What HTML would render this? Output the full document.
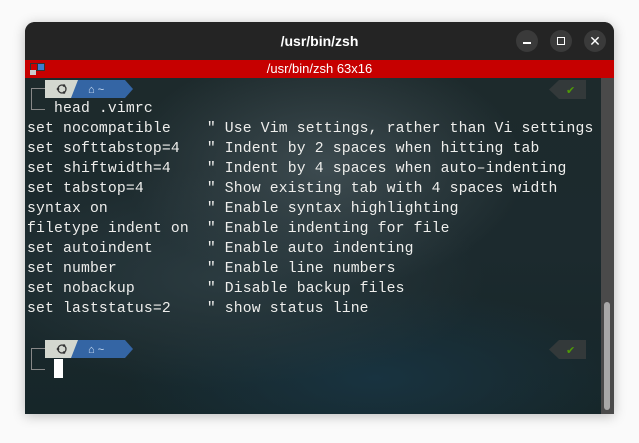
<!DOCTYPE html>
<html><head><style>
body{margin:0;width:639px;height:443px;background:#fafafa;position:relative;overflow:hidden;font-family:"Liberation Sans",sans-serif}
.win{position:absolute;left:25px;top:22px;width:589px;height:392px;border-radius:10px 10px 0 0;overflow:hidden;box-shadow:0 2px 12px rgba(0,0,0,.25);background:#242424}
.title{position:absolute;left:0;top:0;width:589px;height:38px;background:#242424;color:#fff;font-weight:bold;font-size:14px;text-align:center;line-height:38px}
.btn{position:absolute;top:8px;width:22px;height:22px;border-radius:50%;background:#3a3a3a}
.red{position:absolute;left:0;top:38px;width:589px;height:18px;background:#c60000;color:#fff;font-size:13px;text-align:center;line-height:18px}
.term{position:absolute;left:0;top:56px;width:576px;height:336px;background:
radial-gradient(ellipse 200px 120px at 300px 90px,#3d4b50,transparent),
radial-gradient(ellipse 260px 110px at 200px 200px,#2b3b40,transparent),
radial-gradient(ellipse 250px 90px at 350px 300px,#183340,transparent),
linear-gradient(#1d2a2c,#1c2a2e 50%,#162629);}
.sb{position:absolute;left:576px;top:56px;width:13px;height:336px;background:#4a4a4a}
.th{position:absolute;left:3px;top:224px;width:6px;height:108px;border-radius:3px;background:#a8a8a8}
pre{position:absolute;left:2px;top:21px;margin:0;font-family:"Liberation Mono",monospace;font-size:14.75px;letter-spacing:0.14px;line-height:20px;color:#eeeeec}
.seg{position:absolute;height:18px}
</style></head><body>
<div class="win">
<div class="title">/usr/bin/zsh</div>
<div class="btn" style="left:491px"><div style="position:absolute;left:7px;top:12px;width:8px;height:1.5px;background:#fff"></div></div>
<div class="btn" style="left:525px"><div style="position:absolute;left:7px;top:7px;width:6px;height:6px;border:1.5px solid #fff"></div></div>
<div class="btn" style="left:559px;color:#fff;font-size:14px;text-align:center;line-height:22px">✕</div>
<div class="red">/usr/bin/zsh 63x16
<div style="position:absolute;left:5px;top:3px;width:6px;height:6px;background:#c00;border:1px solid #333"></div>
<div style="position:absolute;left:12px;top:3px;width:6px;height:6px;background:#3d7cd0;border:1px solid #333"></div>
<div style="position:absolute;left:5px;top:10px;width:6px;height:5px;background:#ccc"></div>
</div>
<div class="term">
<div style="position:absolute;left:6px;top:10px;width:13px;height:20px;border:1px solid #888;border-right:none"></div>
<div class="seg" style="left:20px;top:2px;width:38px;background:#d3d7cf"></div>
<svg style="position:absolute;left:30px;top:5px" width="14" height="12"><circle cx="7" cy="6" r="4" fill="none" stroke="#333" stroke-width="1.3"/><circle cx="3" cy="6" r="1.3" fill="#333"/><circle cx="9" cy="2.5" r="1.3" fill="#333"/><circle cx="9" cy="9.5" r="1.3" fill="#333"/></svg>
<svg style="position:absolute;left:46px;top:2px" width="62" height="18"><polygon points="7,0 54,0 62,9 54,18 0,18" fill="#3465a4"/><text x="17" y="13" fill="#cfe0f5" font-size="11">⌂ ~</text></svg>
<svg style="position:absolute;left:524px;top:2px" width="37" height="19"><polygon points="10,0 37,0 37,19 10,19 0,9.5" fill="#33393a"/><text x="17" y="14" fill="#4e9a06" font-size="11">✔</text></svg>
<div style="position:absolute;left:6px;top:270px;width:13px;height:20px;border:1px solid #888;border-right:none"></div>
<div class="seg" style="left:20px;top:262px;width:38px;background:#d3d7cf"></div>
<svg style="position:absolute;left:30px;top:265px" width="14" height="12"><circle cx="7" cy="6" r="4" fill="none" stroke="#333" stroke-width="1.3"/><circle cx="3" cy="6" r="1.3" fill="#333"/><circle cx="9" cy="2.5" r="1.3" fill="#333"/><circle cx="9" cy="9.5" r="1.3" fill="#333"/></svg>
<svg style="position:absolute;left:46px;top:262px" width="62" height="18"><polygon points="7,0 54,0 62,9 54,18 0,18" fill="#3465a4"/><text x="17" y="13" fill="#cfe0f5" font-size="11">⌂ ~</text></svg>
<svg style="position:absolute;left:524px;top:262px" width="37" height="19"><polygon points="10,0 37,0 37,19 10,19 0,9.5" fill="#33393a"/><text x="17" y="14" fill="#4e9a06" font-size="11">✔</text></svg>
<div style="position:absolute;left:29px;top:281px;width:9px;height:19px;background:#fff"></div>
<pre>   head .vimrc
set nocompatible    " Use Vim settings, rather than Vi settings
set softtabstop=4   " Indent by 2 spaces when hitting tab
set shiftwidth=4    " Indent by 4 spaces when auto–indenting
set tabstop=4       " Show existing tab with 4 spaces width
syntax on           " Enable syntax highlighting
filetype indent on  " Enable indenting for file
set autoindent      " Enable auto indenting
set number          " Enable line numbers
set nobackup        " Disable backup files
set laststatus=2    " show status line</pre>
</div>
<div class="sb"><div class="th"></div></div>
</div>
</body></html>
